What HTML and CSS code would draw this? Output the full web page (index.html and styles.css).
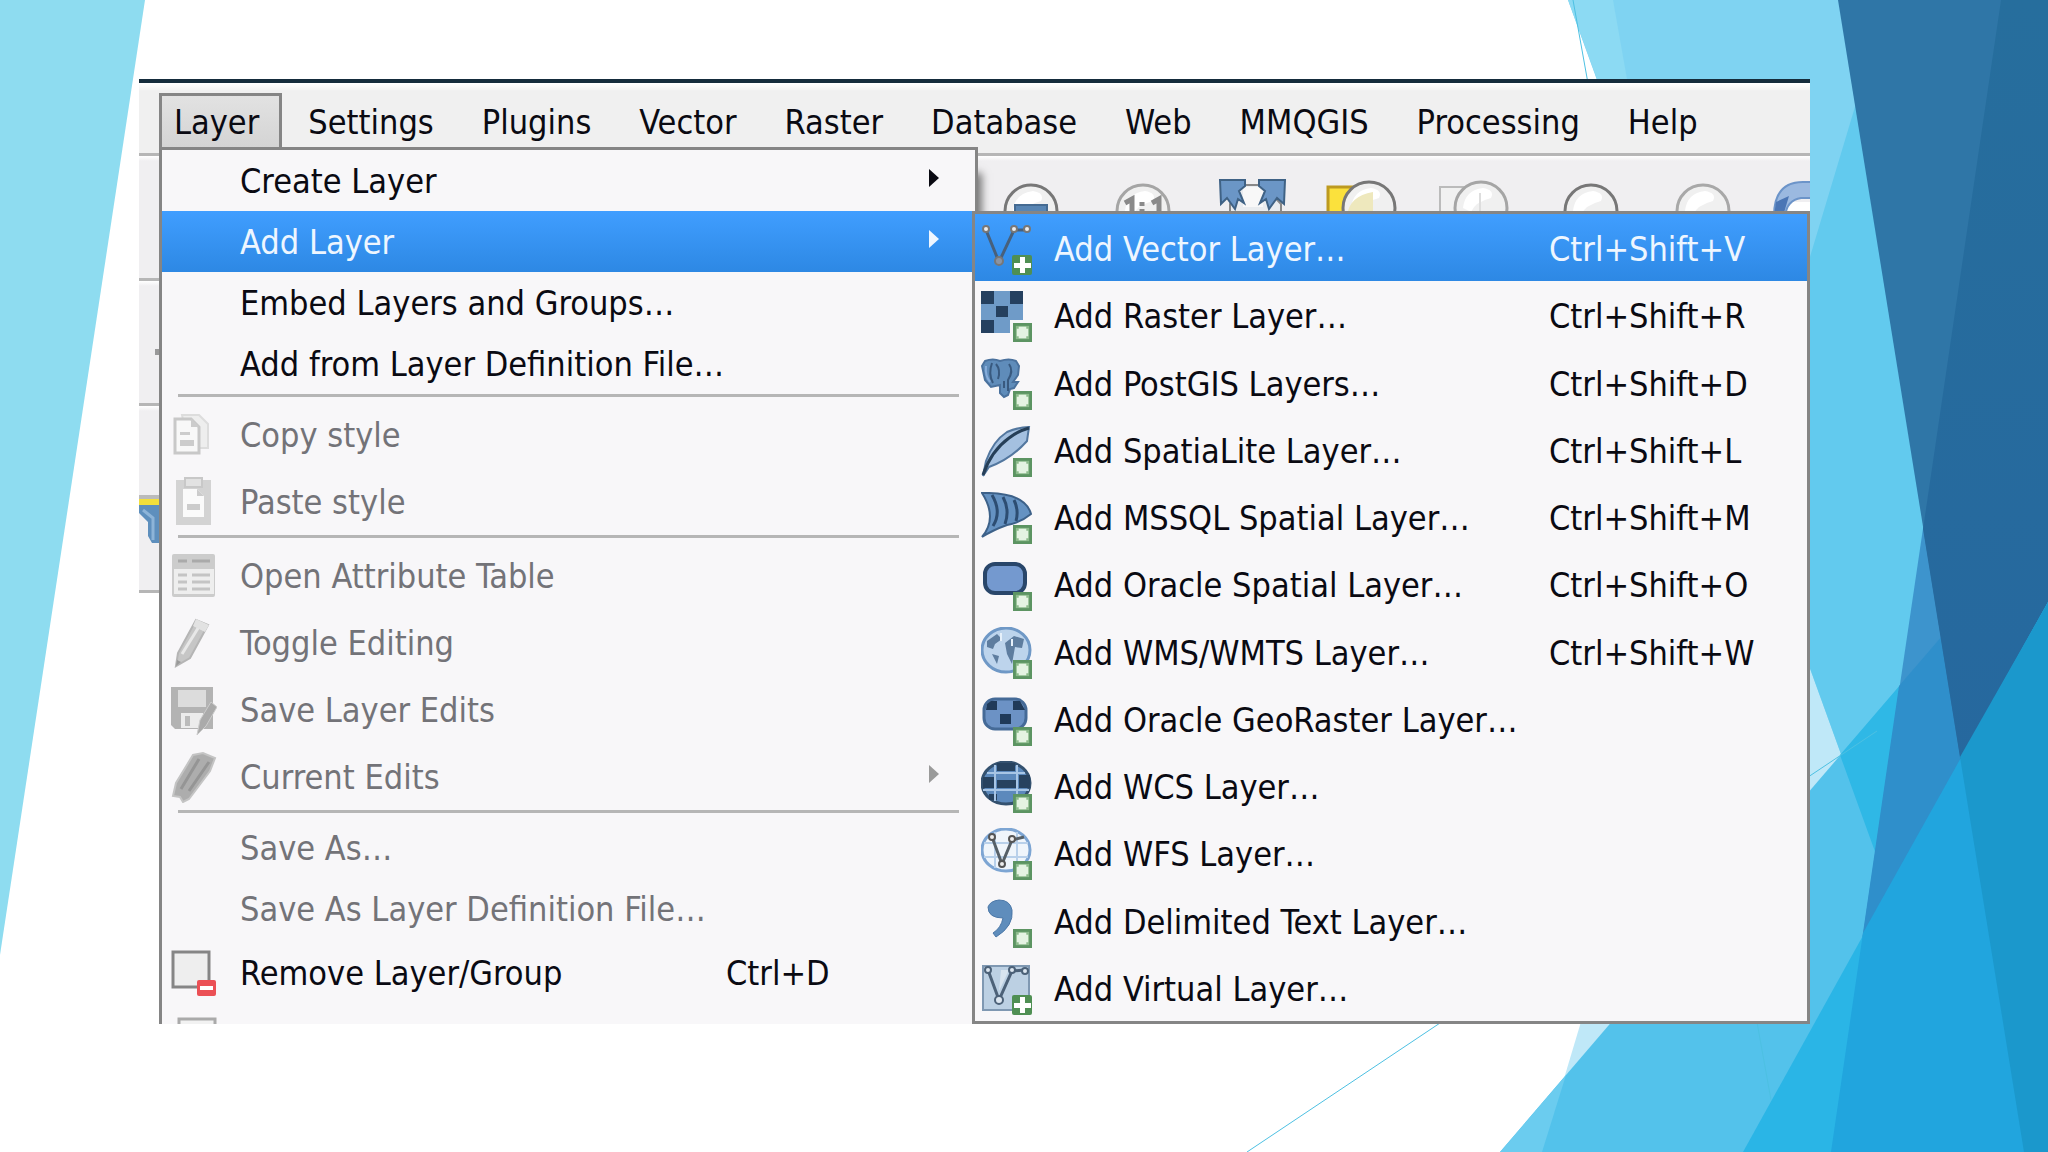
FILE: index.html
```html
<!DOCTYPE html>
<html lang="en">
<head>
<meta charset="utf-8">
<title>QGIS Layer menu</title>
<link rel="stylesheet" href="styles.css">
</head>
<body>
<svg class="backdrop" viewBox="0 0 2048 1152" preserveAspectRatio="none" aria-hidden="true">
  <defs>
    <linearGradient id="navy" x1="0" y1="0" x2="0" y2="1"><stop offset="0" stop-color="#266e9d"/><stop offset="1" stop-color="#26659f"/></linearGradient>
  </defs>
  <path fill="#8edcf0" d="M0 0H145L0 955Z"/>
  <path fill="#bfe8f8" d="M1887 0L1542 1152H2048V0Z"/>
  <path fill="#7fd3f2" d="M1568 0L1985 1152H2048V0Z"/>
  <path fill="#8cdaf3" d="M1568 0L1597 79H1627L1613 0Z"/>
  <path fill="#62caee" d="M1887 0L1771 387L1752 508L1985 1152H2048V0Z"/>
  <path fill="#53c2eb" d="M1500 1152L2048 513V1152Z"/>
  <path fill="#6bccef" d="M1500 1152L1566 1075L1542 1152Z"/>
  <path fill="#2fb8e6" d="M1840 755L2048 513V1152H1902V926Z"/>
  <path fill="#3d94cd" d="M2001 0L1831 1152H2048V0Z"/>
  <path fill="#2f8fcb" d="M1899 686L2048 513V1152H1831Z"/>
  <path fill="#2f76a7" d="M1838 0L2024 1152H2048V0Z"/>
  <path fill="url(#navy)" d="M2001 0L1923 529L2024 1152H2048V0Z"/>
  <path fill="#2ab5e6" d="M1743 1152L2048 602V1152Z"/>
  <path fill="#21a5de" d="M1863 933L2048 602V1152H1831Z"/>
  <path fill="#1b98cc" d="M1960 757L2048 602V1152H2024Z"/>
  <path fill="none" stroke="#4dc0e2" d="M1247 1152L1877 731M1573 0L1771 1100"/>
</svg>

<svg class="sprite" aria-hidden="true">
  <symbol id="plus" viewBox="0 0 20 20"><path fill="#5c9462" d="M0 0h20v20H0z"/><path fill="#8dbb8c" d="M3 3h14v14H3z"/><path fill="#e4f3e2" d="M6 4h8v2h2v8h-2v2H6v-2H4V6h2z"/></symbol>
  <symbol id="plus-bold" viewBox="0 0 20 20"><rect width="20" height="20" rx="2" fill="#4f8f53"/><path fill="#fff" d="M8 2h5v6h6v5h-6v5H8v-5H2V8h6z"/></symbol>
  <symbol id="lens" viewBox="0 0 60 60"><circle cx="30" cy="30" r="26" fill="#f0f0f0" stroke="currentColor" stroke-width="3"/><path fill="#fff" d="M12 30Q14 12 32 10Q44 12 40 20Q24 24 20 34Z"/></symbol>
</svg>

<main class="slide">
<div class="app">
  <nav class="menubar" aria-label="Menu bar">
    <button class="open" aria-expanded="true">Layer</button>
    <button>Settings</button>
    <button>Plugins</button>
    <button>Vector</button>
    <button>Raster</button>
    <button>Database</button>
    <button>Web</button>
    <button>MMQGIS</button>
    <button>Processing</button>
    <button>Help</button>
  </nav>

  <div class="workspace">
    <div class="toolbars">
      <div class="toolbar tools">
        <svg viewBox="0 0 112 60"><use href="#lens" x="26" y="25" width="60" height="60" color="#777"/><path fill="#5885b3" stroke="#456b92" stroke-width="2" d="M40 49h32v13H40z"/></svg>
        <svg viewBox="0 0 112 60"><use href="#lens" x="26" y="25" width="60" height="60" color="#a5a5a5"/><path fill="none" stroke="#8a8a8a" stroke-width="5" d="M38 47l7-4v17M65 47l7-4v17M55 46v4M55 53v4"/></svg>
        <svg viewBox="0 0 112 60"><path fill="#e9ecef" stroke="#888" stroke-width="2" d="M31 60V48L44 29H64L82 48V60Z"/><path fill="#f8f8f8" d="M44 31h20v20H44z"/><path fill="#6b96c6" stroke="#3f6285" stroke-width="2" d="M21 24H46V30L40 35L45 47L39 43L36 53L28 42L22 48ZM86 24H60V30L66 35L61 47L67 43L70 53L78 42L85 48Z"/></svg>
        <svg viewBox="0 0 112 60"><path fill="#fbe13c" stroke="#bd9a20" stroke-width="3" d="M17 31h40v30H17z"/><use href="#lens" x="28" y="22" width="60" height="60" color="#777"/><path fill="#eee8bd" d="M36 60Q38 40 62 36V60Z"/></svg>
        <svg viewBox="0 0 112 60"><path fill="#f1f1f1" stroke="#bbb" stroke-width="2" d="M17 31h40v30H17z"/><use href="#lens" x="28" y="22" width="60" height="60" color="#a5a5a5"/><path stroke="#ddd" stroke-width="2" d="M57 37V60"/></svg>
        <svg viewBox="0 0 112 60"><use href="#lens" x="26" y="25" width="60" height="60" color="#777"/></svg>
        <svg viewBox="0 0 112 60"><use href="#lens" x="26" y="25" width="60" height="60" color="#a8a8a8"/></svg>
        <svg viewBox="0 0 112 60"><path fill="#fff" d="M28 60V46H60V60Z"/><path fill="#9bb9e0" stroke="#6c94c9" stroke-width="2" d="M15 60Q15 26 44 26H60V42H42Q28 44 26 60Z"/><path fill="#4b76b5" d="M15 60L17 46L30 40L24 60Z"/></svg>
      </div>
      <div class="toolbar">
        <svg class="grip" viewBox="0 0 20 122"><path fill="#999" d="M16 68h4v6h-4z"/></svg>
      </div>
      <div class="toolbar last">
        <svg class="digitize" viewBox="0 0 20 60"><path fill="#bbb" d="M0 4h20v4H0z"/><path fill="#f2df3c" d="M0 8h20v6H0z"/><path fill="#5e8fbd" d="M0 14h20v38h-7l-4-7V31L0 22z"/><path fill="none" stroke="#8db4d8" stroke-width="3" d="M4 19l10 8v22"/></svg>
      </div>
    </div>

    <ul class="menu" role="menu" aria-label="Layer">
      <li><button class="item"><span class="label">Create Layer</span><i class="arrow"></i></button></li>
      <li><button class="item active"><span class="label">Add Layer</span><i class="arrow"></i></button></li>
      <li><button class="item"><span class="label">Embed Layers and Groups…</span></button></li>
      <li><button class="item"><span class="label">Add from Layer Definition File…</span></button></li>
      <li class="rule" role="separator"></li>
      <li><button class="item tall" disabled>
        <svg class="icon" viewBox="0 0 46 52"><path fill="#eee" stroke="#ddd" stroke-width="2" d="M11 6h17l9 9v24H18z"/><path fill="#f8f8f8" stroke="#c8c8c8" stroke-width="3" d="M4 10h16l8 8v26H4z"/><path fill="#ccc" d="M20 9l8 9h-8zM9 23h10v3H9zM9 31h14v6H9z"/></svg>
        <span class="label">Copy style</span></button></li>
      <li><button class="item tall" disabled>
        <svg class="icon" viewBox="0 0 46 52"><path fill="#d3d3d3" d="M5 4h35v45H5z"/><path fill="#e2e2e2" stroke="#c8c8c8" stroke-width="2" d="M14 2h17v9H14z"/><path fill="#fafafa" d="M12 13h14l7 7v21H12z"/><path fill="#ccc" d="M26 13l7 7h-7zM16 28h13v6H16z"/></svg>
        <span class="label">Paste style</span></button></li>
      <li class="rule" role="separator"></li>
      <li><button class="item tall" disabled>
        <svg class="icon" viewBox="0 0 46 52"><rect x="1" y="4" width="43" height="43" rx="2" fill="#ccc"/><path fill="#eee" d="M3 19h40v25H3z"/><path stroke="#c4c4c4" stroke-width="3" d="M7 25h9M21 25h18M7 32h9M21 32h18M7 39h9M21 39h18"/><path stroke="#aaa" stroke-width="3" d="M7 11h9M21 11h18"/></svg>
        <span class="label">Open Attribute Table</span></button></li>
      <li><button class="item tall" disabled>
        <svg class="icon" viewBox="0 0 46 52"><path fill="#c6c6c6" stroke="#b5b5b5" stroke-width="2" d="M5 49L7 36L25 3L37 8L19 41Z"/><path stroke="#e8e8e8" stroke-width="3" d="M11 37L29 8"/><path fill="#e2e2e2" d="M25 2L38 8L34 15L22 9Z"/><path fill="#999" d="M5 49L6 43L10 45Z"/></svg>
        <span class="label">Toggle Editing</span></button></li>
      <li><button class="item tall" disabled>
        <svg class="icon" viewBox="0 0 46 52"><path fill="#b3b3b3" d="M0 3h42v42H4l-4-4z"/><path fill="#dcdcdc" d="M7 6h28v17H7z"/><path fill="#ececec" d="M10 29h22v15H10z"/><path fill="#bbb" d="M14 32h5v10h-5z"/><path fill="#aaa" stroke="#ccc" d="M26 51L29 36L40 18L46 23L35 42Z"/></svg>
        <span class="label">Save Layer Edits</span></button></li>
      <li><button class="item tall" disabled>
        <svg class="icon" viewBox="0 0 46 52"><path fill="#adadad" stroke="#c4c4c4" stroke-width="2" d="M2 45L5 32L22 4L32 2L44 7L39 20L18 48L12 51L9 46Z"/><path fill="none" stroke="#959595" stroke-width="3" d="M10 38L28 8M18 40L38 11"/></svg>
        <span class="label">Current Edits</span><i class="arrow"></i></button></li>
      <li class="rule" role="separator"></li>
      <li><button class="item" disabled><span class="label">Save As…</span></button></li>
      <li><button class="item" disabled><span class="label">Save As Layer Definition File…</span></button></li>
      <li><button class="item tall">
        <svg class="icon" viewBox="0 0 46 52"><path fill="#eee" stroke="#858585" stroke-width="3" d="M2 5h36v35H2z"/><rect x="26" y="33" width="19" height="16" rx="2" fill="#eb5055"/><path fill="#fff" d="M29 39h13v4H29z"/></svg>
        <span class="label">Remove Layer/Group</span><kbd>Ctrl+D</kbd></button></li>
      <li class="cut" aria-hidden="true"><svg class="icon" viewBox="0 0 46 52"><path fill="#f2f2f2" stroke="#aaa" stroke-width="3" d="M8 13h36v36H8z"/></svg></li>
    </ul>

    <ul class="menu submenu" role="menu" aria-label="Add Layer">
      <li><button class="item active">
        <svg class="icon" viewBox="0 0 52 52"><path fill="none" stroke="#47607c" stroke-width="3" d="M5 7L18 39L33 7H46"/><g fill="#eee" stroke="#777" stroke-width="2"><circle cx="5" cy="6" r="3"/><circle cx="33" cy="6" r="3"/><circle cx="46" cy="6" r="3"/><circle cx="18" cy="38" r="4" fill="#8a94a5"/></g><use href="#plus-bold" x="31" y="32" width="20" height="20"/></svg>
        <span class="label">Add Vector Layer…</span><kbd>Ctrl+Shift+V</kbd></button></li>
      <li><button class="item">
        <svg class="icon" viewBox="0 0 52 52"><path fill="#6f9bc8" d="M0 1h42v29H29v13H0z"/><path fill="#25405f" d="M0 1h13v13H0zM29 1h13v13H29zM15 16h12v11H15zM0 30h13v13H0z"/><use href="#plus" x="32" y="33" width="19" height="19"/></svg>
        <span class="label">Add Raster Layer…</span><kbd>Ctrl+Shift+R</kbd></button></li>
      <li><button class="item">
        <svg class="icon" viewBox="0 0 52 52"><path fill="#5f8cba" stroke="#4a719d" stroke-width="2" d="M4 3Q12 0 19 3Q28 0 35 3L38 8L37 17L32 24H37L33 30L29 31L27 37L23 39L19 35V27L10 29L4 22L1 8Z"/><path fill="none" stroke="#38597f" stroke-width="2" d="M11 5Q7 16 12 25M15 6Q20 12 17 21M28 6Q33 13 27 22V33M23 23V30"/><path fill="none" stroke="#87addb" stroke-width="2" d="M5 8Q4 18 9 24"/><use href="#plus" x="32" y="33" width="19" height="19"/></svg>
        <span class="label">Add PostGIS Layers…</span><kbd>Ctrl+Shift+D</kbd></button></li>
      <li><button class="item">
        <svg class="icon" viewBox="0 0 52 52"><path fill="#a4c0e0" stroke="#53779f" stroke-width="2" d="M2 51L5 36Q12 16 26 7Q38 2 48 2L46 16Q30 34 8 42L2 51Z"/><path fill="none" stroke="#263f58" stroke-width="3" d="M2 50Q10 26 28 13Q37 6 48 3"/><use href="#plus" x="32" y="33" width="19" height="19"/></svg>
        <span class="label">Add SpatiaLite Layer…</span><kbd>Ctrl+Shift+L</kbd></button></li>
      <li><button class="item">
        <svg class="icon" viewBox="0 0 52 52"><path fill="#6592c2" stroke="#3d6189" stroke-width="2" d="M1 1Q44 0 50 22Q39 31 26 33Q12 38 1 45Q17 26 1 1Z"/><path fill="none" stroke="#2d4d72" stroke-width="3" d="M11 3Q21 20 12 34M22 5Q29 18 24 32M33 8Q38 18 35 29"/><use href="#plus" x="32" y="33" width="19" height="19"/></svg>
        <span class="label">Add MSSQL Spatial Layer…</span><kbd>Ctrl+Shift+M</kbd></button></li>
      <li><button class="item">
        <svg class="icon" viewBox="0 0 52 52"><rect x="4" y="5" width="40" height="29" rx="10" fill="#7499cf" stroke="#29466a" stroke-width="4"/><use href="#plus" x="32" y="33" width="19" height="19"/></svg>
        <span class="label">Add Oracle Spatial Layer…</span><kbd>Ctrl+Shift+O</kbd></button></li>
      <li><button class="item">
        <svg class="icon" viewBox="0 0 52 52"><ellipse cx="25" cy="23" rx="24" ry="22" fill="#bdd4ec" stroke="#6f98c6" stroke-width="3"/><path fill="#5e7d9f" d="M6 14L16 7L21 12L14 17L12 22L6 20ZM11 27L18 29L16 37ZM24 16L33 9L43 12L41 21L34 20L31 37L26 27Z"/><path stroke="#e6f0fa" stroke-width="2" d="M20 6v8M31 12v7"/><use href="#plus" x="32" y="33" width="19" height="19"/></svg>
        <span class="label">Add WMS/WMTS Layer…</span><kbd>Ctrl+Shift+W</kbd></button></li>
      <li><button class="item">
        <svg class="icon" viewBox="0 0 52 52"><rect x="3" y="5" width="42" height="30" rx="11" fill="#6c92c5" stroke="#456a97" stroke-width="3"/><path fill="#203a59" d="M6 10l4-3h6v9H5zM32 7h7l5 9H32zM19 20h11v10H19z"/><use href="#plus" x="32" y="33" width="19" height="19"/></svg>
        <span class="label">Add Oracle GeoRaster Layer…</span></button></li>
      <li><button class="item">
        <svg class="icon" viewBox="0 0 52 52"><ellipse cx="25" cy="22" rx="24" ry="21" fill="#5c89bc" stroke="#34516f" stroke-width="3"/><path fill="#27425f" d="M16 2h18v8H16zM2 16h11v11H2zM16 19h19v8H16zM38 14h11v13H38zM8 33h8v6H8z"/><path fill="none" stroke="#a7c5e5" stroke-width="2" d="M6 12H44M2 29H48M14 4V40M36 4V36"/><use href="#plus" x="32" y="33" width="19" height="19"/></svg>
        <span class="label">Add WCS Layer…</span></button></li>
      <li><button class="item">
        <svg class="icon" viewBox="0 0 52 52"><ellipse cx="25" cy="22" rx="24" ry="21" fill="#eff5fb" stroke="#7da5d3" stroke-width="3"/><path fill="none" stroke="#b8d0ea" stroke-width="2" d="M3 15H47M3 29H47M14 4V40M36 4V40"/><path fill="none" stroke="#566068" stroke-width="3" d="M11 9L21 36L31 12L43 9"/><g fill="#eee" stroke="#555" stroke-width="2"><circle cx="11" cy="9" r="3"/><circle cx="31" cy="11" r="3"/><circle cx="21" cy="36" r="3"/></g><use href="#plus" x="32" y="33" width="19" height="19"/></svg>
        <span class="label">Add WFS Layer…</span></button></li>
      <li><button class="item">
        <svg class="icon" viewBox="0 0 52 52"><path fill="#5f8dbc" stroke="#4c78a8" d="M7 11Q9 5 18 4Q29 4 31 14Q33 30 15 41L12 37Q20 32 22 22Q7 22 7 11Z"/><use href="#plus" x="32" y="33" width="19" height="19"/></svg>
        <span class="label">Add Delimited Text Layer…</span></button></li>
      <li><button class="item">
        <svg class="icon" viewBox="0 0 52 52"><path fill="#bcd0e3" stroke="#7f98b2" stroke-width="2" d="M2 3h46v44H2z"/><path fill="#d8e4ef" d="M20 7h8L18 28z"/><path fill="none" stroke="#4c6178" stroke-width="3" d="M7 7L18 37L31 8L44 7"/><g fill="#dce6f0" stroke="#4c6178" stroke-width="2"><circle cx="7" cy="7" r="3"/><circle cx="31" cy="7" r="3"/><circle cx="44" cy="8" r="3"/><circle cx="18" cy="37" r="4"/></g><use href="#plus-bold" x="31" y="32" width="20" height="20"/></svg>
        <span class="label">Add Virtual Layer…</span></button></li>
    </ul>
  </div>
</div>
</main>
</body>
</html>
```

FILE: styles.css
```css
* { box-sizing: border-box; }

body {
  margin: 0;
  min-height: 100vh;
  background: #fff;
  color: #0a0a12;
  font: 34px/40px "DejaVu Sans Condensed", "Noto Sans", sans-serif;
}

.backdrop {
  position: fixed;
  inset: 0;
  width: 100%;
  height: 100%;
  z-index: -1;
}

.sprite { position: absolute; width: 0; height: 0; }

.slide { padding: 79px 238px 0 139px; }

.app { border-top: 4px solid #152c3c; }

button {
  border: 0;
  padding: 0;
  background: none;
  color: inherit;
  font: inherit;
  text-align: left;
}

.menubar {
  display: flex;
  gap: 5px;
  height: 67px;
  padding: 10px 20px 0;
  background: linear-gradient(#fff, #f0f0f0 8px);
}

.menubar button {
  height: 57px;
  padding: 0 19px 0 18px;
  border: 3px solid transparent;
}

.menubar .open {
  padding: 0 20px 0 12px;
  border-color: #858585;
  background: linear-gradient(#e2e2e2, #d4d4d4);
}

.workspace {
  display: grid;
  grid-template-columns: 20px 819fr 832fr;
}

.toolbars {
  grid-area: 1 / 1 / 2 / -1;
  overflow: hidden;
  background: linear-gradient(#f0f0f0 3px, #fff 3px);
}

.toolbar {
  height: 125px;
  border-bottom: 3px solid #b6b6b6;
  background: linear-gradient(#fff, #f0eff1 5px);
}

.tools {
  display: flex;
  height: 128px;
  margin-top: 3px;
  padding-left: 836px;
  border-top: 3px solid #b6b6b6;
}

.tools svg { flex: none; width: 112px; height: 60px; }

.grip { display: block; width: 20px; height: 122px; }

.last { height: 187px; padding-top: 85px; }

.digitize { display: block; width: 20px; height: 60px; }

.menu {
  grid-area: 1 / 2;
  margin: -3px 0 0;
  padding: 0;
  list-style: none;
  border: solid #858585;
  border-width: 3px 3px 0;
  background: #f8f7f9;
  box-shadow: 8px 22px 8px -4px #777;
  clip-path: inset(0 -16px 0 0);
}

.submenu {
  display: grid;
  grid-area: 1 / 3;
  grid-auto-rows: 1fr;
  margin: 61px 0 0 -6px;
  border-width: 3px;
  box-shadow: none;
}

.item {
  display: grid;
  grid-template-columns: 69px 1fr 203px 46px;
  align-items: center;
  width: 100%;
  height: 61px;
  padding-left: 9px;
}

.submenu .item {
  grid-template-columns: 73px 1fr 258px;
  height: 100%;
  min-height: 67px;
  padding: 3px 0 0 6px;
}

.item.tall { height: 67px; }

.item > * { grid-row: 1; }

.label { grid-column: 2; white-space: nowrap; }

kbd { grid-column: 3; font: inherit; }

.item:disabled { color: #737378; }

.item.active {
  background: linear-gradient(#409eff, #2d88e4);
  color: #eef6ff;
}

.icon { display: block; width: 46px; height: 52px; }

.submenu .icon { width: 52px; }

.arrow {
  grid-column: 4;
  width: 0;
  height: 0;
  margin-bottom: 6px;
  border: solid transparent;
  border-width: 9px 0 9px 10px;
  border-left-color: currentColor;
}

.item:disabled .arrow { border-left-color: #9a9a9a; }

.rule {
  height: 7px;
  margin: 0 16px;
  border-top: 3px solid #b6b6b6;
}

.cut { height: 18px; padding-left: 9px; overflow: hidden; }
```
